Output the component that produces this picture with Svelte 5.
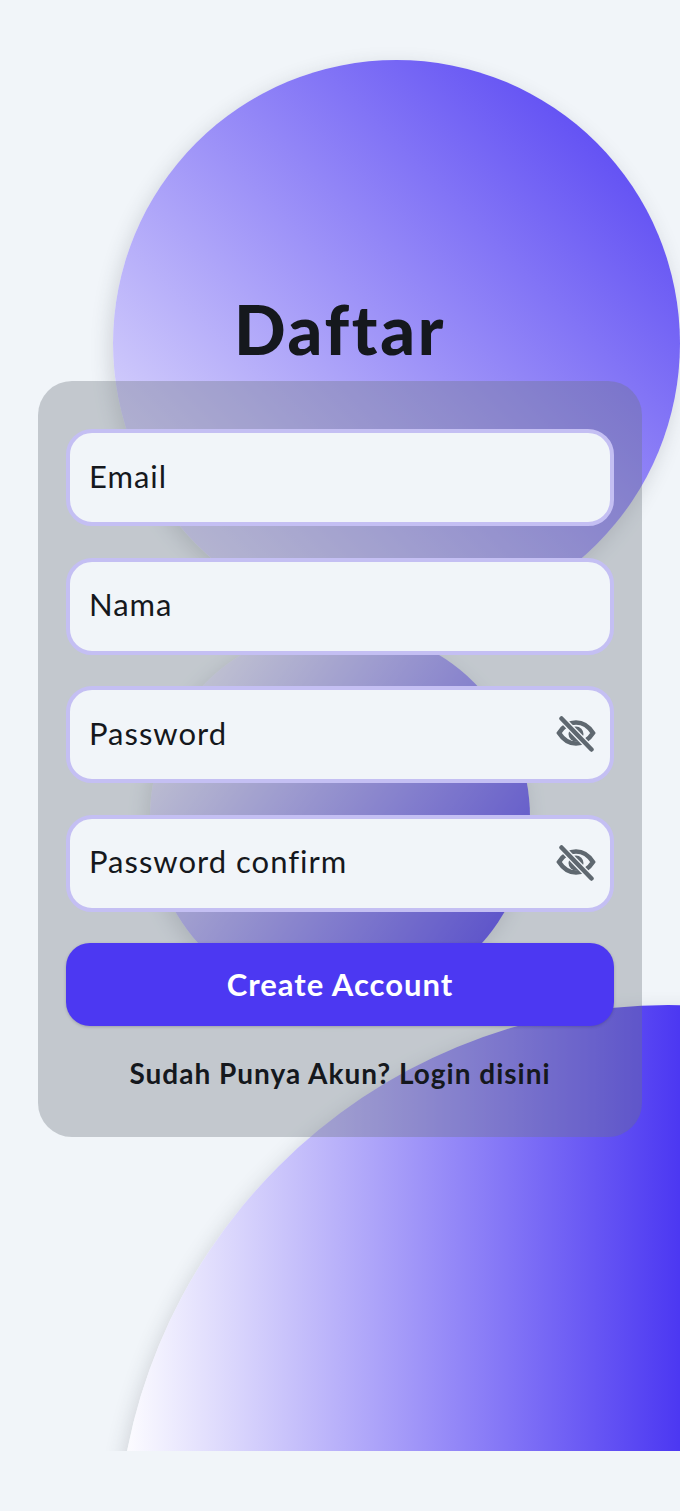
<script lang="ts">
  const fields = [
    { name: 'email', type: 'email', placeholder: 'Email', secret: false },
    { name: 'nama', type: 'text', placeholder: 'Nama', secret: false },
    { name: 'password', type: 'password', placeholder: 'Password', secret: true },
    { name: 'confirm', type: 'password', placeholder: 'Password confirm', secret: true }
  ];
</script>

<main class="page">
  <div class="backdrop" aria-hidden="true">
    <div class="circle top"></div>
    <div class="circle middle"></div>
    <div class="circle bottom"></div>
  </div>

  <h1>Daftar</h1>

  <form class="card" onsubmit={(e) => e.preventDefault()}>
    {#each fields as field}
      <div class="field">
        <input type={field.type} name={field.name} placeholder={field.placeholder} />
        {#if field.secret}
          <button type="button" class="eye" aria-label="Show password">
            <svg viewBox="0 0 40 36" width="40" height="36" fill="none" stroke="currentColor" stroke-width="4.500" stroke-linecap="round">
              <path d="M3 17C7.500 10 13 6.500 20 6.500S32.500 10 37 17C32.500 24 27 27.500 20 27.500S7.500 24 3 17Z" />
              <circle cx="20" cy="18" r="7.500" fill="currentColor" stroke="none" />
              <path d="M5.500 2.500l30 31" stroke="#f1f5f9" stroke-width="7" stroke-linecap="butt" />
              <path d="M5.500 2.500l30 31" />
            </svg>
          </button>
        {/if}
      </div>
    {/each}

    <button type="submit" class="submit">Create Account</button>
    <p class="login">Sudah Punya Akun? Login disini</p>
  </form>
</main>

<style>
  :global(body) {
    margin: 0;
    background: #f1f5f9;
  }

  .page {
    position: relative;
    width: 680px;
    height: 1511px;
    overflow: hidden;
    font-family: Lato, "Open Sans", sans-serif;
    color: #15181d;
  }

  .backdrop {
    position: absolute;
    left: 0;
    top: 0;
    width: 680px;
    height: 1451px;
    overflow: hidden;
  }

  .circle {
    position: absolute;
    border-radius: 50%;
    box-shadow: -3px 6px 20px rgba(50, 55, 65, 0.18);
  }

  .top {
    left: 113px;
    top: 60px;
    width: 567px;
    height: 567px;
    background: linear-gradient(45deg, #fff -8%, #4c38f2 100%);
  }

  .middle {
    left: 150px;
    top: 627px;
    width: 380px;
    height: 380px;
    background: linear-gradient(125deg, #fff 4%, #4c38f2 92%);
  }

  .bottom {
    left: 117px;
    top: 1005px;
    width: 1102px;
    height: 1102px;
    background: linear-gradient(90deg, #fff 0%, #4c38f2 51%);
  }

  h1 {
    position: relative;
    margin: 0;
    padding-top: 287px;
    height: 94px;
    font-size: 68px;
    line-height: 84px;
    font-weight: 900;
    letter-spacing: 2.700px;
    text-align: center;
  }

  .card {
    position: relative;
    margin: 0 38px;
    height: 756px;
    box-sizing: border-box;
    padding: 48px 28px 0;
    display: flex;
    flex-direction: column;
    gap: 31.500px;
    background: rgba(108, 117, 125, 0.35);
    border-radius: 34px;
  }

  .field {
    position: relative;
  }

  input {
    display: block;
    width: 100%;
    height: 97px;
    box-sizing: border-box;
    padding: 0 19px 4px;
    background: #f1f5f9;
    border: 4px solid #c4bff3;
    border-radius: 26px;
    font: 400 31px Lato, "Open Sans", sans-serif;
    letter-spacing: 1px;
    color: #15181d;
    outline: none;
  }

  input::placeholder {
    color: #15181d;
    opacity: 1;
  }

  .eye {
    position: absolute;
    right: 18px;
    top: 30px;
    padding: 0;
    border: 0;
    background: none;
    color: #5f6870;
    display: flex;
  }

  .submit {
    height: 83px;
    padding: 0 0 2px;
    border: 0;
    border-radius: 24px;
    background: #4c38f2;
    color: #fff;
    font: 700 31px Lato, "Open Sans", sans-serif;
    letter-spacing: 1px;
    box-shadow: 0 1px 3px rgba(40, 40, 60, 0.25);
  }

  .login {
    margin: 0;
    text-align: center;
    font-size: 28px;
    line-height: 30px;
    font-weight: 700;
    letter-spacing: 1px;
  }
</style>
